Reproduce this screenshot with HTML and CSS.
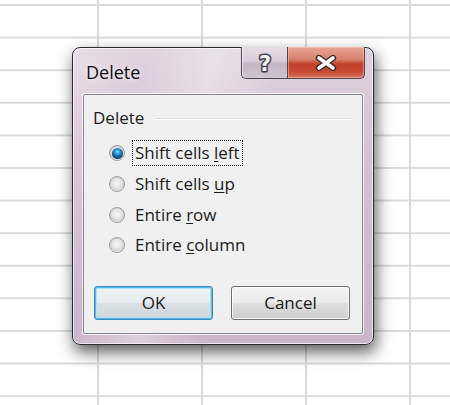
FILE: index.html
```html
<!DOCTYPE html>
<html>
<head>
<meta charset="utf-8">
<link rel="stylesheet" href="styles.css">
</head>
<body>
<div class="dialog">
  <div class="titlebar">
    <span class="title">Delete</span>
    <div class="caption-btns">
      <div class="cbtn help">
        <svg width="20" height="24" viewBox="0 0 20 24"><text x="10" y="20" text-anchor="middle" class="qmark">?</text></svg>
      </div>
      <div class="cbtn close">
        <svg width="22" height="16" viewBox="0 0 22 16">
          <path d="M4 3 L18 13 M18 3 L4 13" stroke="#3a2a2a" stroke-width="6.4" stroke-linecap="round"/>
          <path d="M4 3 L18 13 M18 3 L4 13" stroke="#ffffff" stroke-width="3.6" stroke-linecap="round"/>
        </svg>
      </div>
    </div>
  </div>
  <div class="panel">
    <div class="group-label"><span>Delete</span><span class="rule"></span></div>
    <div class="options">
      <div class="opt"><span class="radio checked"></span><span class="label focus">Shift cells <u>l</u>eft</span></div>
      <div class="opt"><span class="radio"></span><span class="label">Shift cells <u>u</u>p</span></div>
      <div class="opt"><span class="radio"></span><span class="label">Entire <u>r</u>ow</span></div>
      <div class="opt"><span class="radio"></span><span class="label">Entire <u>c</u>olumn</span></div>
    </div>
    <div class="buttons">
      <div class="btn default">OK</div>
      <div class="btn">Cancel</div>
    </div>
  </div>
</div>
</body>
</html>
```
FILE: styles.css
```css
html, body {
  margin: 0;
  padding: 0;
}
body {
  width: 450px;
  height: 405px;
  overflow: hidden;
  background-color: #ffffff;
  background-image:
    linear-gradient(to right, #dadada 2px, transparent 2px),
    linear-gradient(to bottom, #dadada 2px, transparent 2px);
  background-size: 104px 100%, 100% 32.6px;
  background-position: 97px 0, 0 4px;
  font-family: "Open Sans", "Noto Sans", sans-serif;
  color: #1c1c1c;
  padding-top: 47px;
  box-sizing: border-box;
}
.dialog {
  margin-left: 72px;
  width: 302px;
  height: 298px;
  box-sizing: border-box;
  border: 1px solid #2e2a2e;
  border-radius: 8px;
  padding: 0 10px 10px 10px;
  background:
    linear-gradient(105deg, rgba(255,255,255,0.25) 0%, rgba(255,255,255,0) 20%, rgba(255,255,255,0.35) 38%, rgba(255,255,255,0) 55%),
    linear-gradient(to bottom, #e0d2de 0%, #d3c0d1 40%, #cbb5ca 100%);
  box-shadow: inset 0 0 0 1px rgba(255,255,255,0.65), 2px 7px 16px rgba(0,0,0,0.65);
}
.titlebar {
  height: 46px;
  display: flex;
  align-items: flex-start;
}
.title {
  padding-left: 3px;
  padding-top: 11px;
  line-height: 26px;
  font-size: 18px;
  color: #101010;
  text-shadow: 0 0 6px rgba(255,255,255,0.9);
}
.caption-btns {
  margin-left: auto;
  margin-right: -2px;
  margin-top: -1px;
  display: flex;
}
.cbtn {
  height: 32px;
  box-sizing: border-box;
  border: 1px solid #4e4650;
  border-top: none;
  display: flex;
  align-items: center;
  justify-content: center;
}
.help {
  width: 46px;
  border-right: none;
  border-bottom-left-radius: 5px;
  background: linear-gradient(to bottom, #e6dde6 0%, #d8ccd8 45%, #c2b6c4 55%, #cfc4d0 100%);
  box-shadow: inset 1px 0 0 rgba(255,255,255,0.6);
}
.close {
  width: 78px;
  border-bottom-right-radius: 5px;
  background: linear-gradient(to bottom, #e8a597 0%, #d8806b 40%, #c0402a 55%, #c84a33 80%, #d87a62 100%);
  box-shadow: inset 0 0 0 1px rgba(255,210,200,0.45);
}
.qmark {
  font-family: "DejaVu Sans", sans-serif;
  font-weight: bold;
  font-size: 21px;
  fill: #f4f4f4;
  stroke: #3e3e48;
  stroke-width: 3px;
  stroke-linejoin: round;
  paint-order: stroke fill;
}
.panel {
  height: 240px;
  box-sizing: border-box;
  background: #f0f0f0;
  border: 1px solid #8a8690;
  border-radius: 2px;
  box-shadow: 0 0 0 1px rgba(255,255,255,0.75);
  padding-top: 12px;
}
.group-label {
  display: flex;
  align-items: center;
  padding-left: 9px;
  padding-right: 10px;
  height: 22px;
  font-size: 17px;
  line-height: 22px;
}
.rule {
  flex: 1;
  height: 1px;
  margin-left: 10px;
  background: #d8dde0;
  box-shadow: 0 1px 0 #ffffff;
}
.options {
  margin-top: 9px;
}
.opt {
  height: 30.67px;
  display: flex;
  align-items: center;
  padding-left: 25px;
  font-size: 17px;
}
.radio {
  width: 16px;
  height: 16px;
  box-sizing: border-box;
  border-radius: 50%;
  border: 1px solid #9a9a9c;
  background: radial-gradient(circle at 50% 45%, #f6f6f6 0%, #e4e4e4 45%, #d0d0d0 60%, #f4f4f4 75%);
  position: relative;
  flex: none;
}
.radio.checked::after {
  content: "";
  position: absolute;
  left: 1.5px;
  top: 1.5px;
  width: 11px;
  height: 11px;
  border-radius: 50%;
  background: radial-gradient(circle at 50% 35%, #8fe0ff 0%, #2a92cf 30%, #0b4f7e 65%, #12324f 100%);
}
.label {
  margin-left: 7px;
  padding: 1px 2px;
  line-height: 22px;
  border: 1px solid transparent;
}
.label.focus {
  border: 1px dotted #222;
}
u {
  text-decoration-thickness: 1px;
  text-underline-offset: 2px;
}
.buttons {
  margin-top: 25px;
  padding-left: 10px;
  display: flex;
  gap: 18px;
}
.btn {
  width: 119px;
  height: 34px;
  box-sizing: border-box;
  border: 1px solid #707070;
  border-radius: 3px;
  display: flex;
  align-items: center;
  justify-content: center;
  font-size: 17px;
  color: #1a1a1a;
  background: linear-gradient(to bottom, #f3f3f3 0%, #ebebeb 48%, #dddddd 52%, #cfcfcf 100%);
  box-shadow: inset 0 0 0 1px rgba(255,255,255,0.8);
}
.btn.default {
  border: 1px solid #3c8cc4;
  background: linear-gradient(to bottom, #eef3f5 0%, #e6ecef 48%, #d9e0e3 52%, #cdd6da 100%);
  box-shadow: inset 0 0 0 1px #54b7e6, inset 0 0 0 2px #aee2f5;
}
```
